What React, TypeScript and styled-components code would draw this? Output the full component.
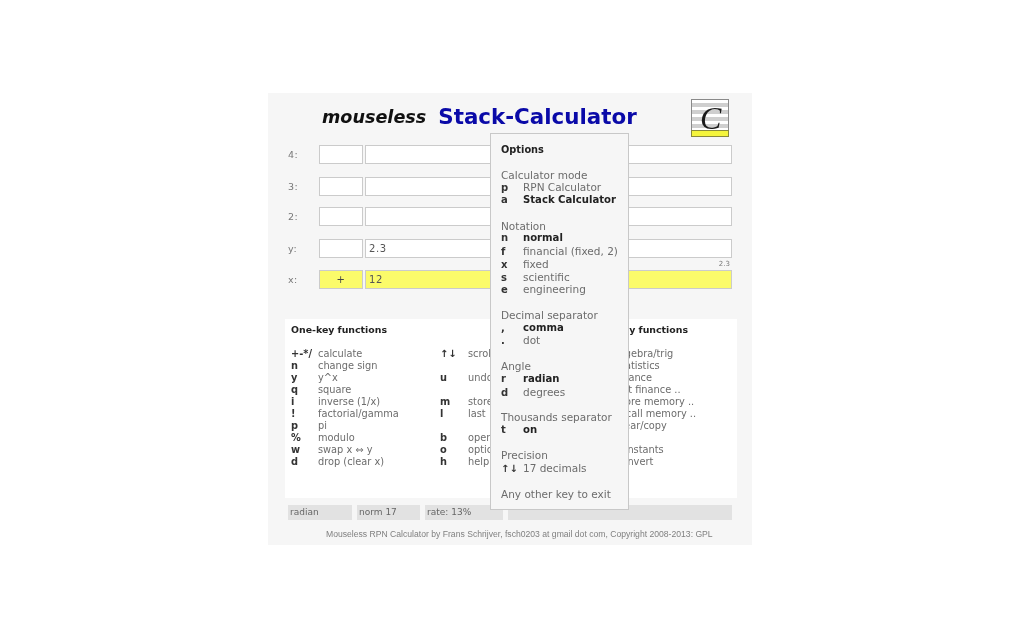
import React from "react";
import styled, { createGlobalStyle } from "styled-components";

const GlobalStyle = createGlobalStyle`
  html, body {
    margin: 0;
    padding: 0;
    background: #fff;
    font-family: "DejaVu Sans", Verdana, sans-serif;
  }
`;

const Page = styled.div`
  width: 1020px;
  height: 638px;
  padding-top: 93px;
  box-sizing: border-box;
  overflow: hidden;
`;

const Panel = styled.div`
  position: relative;
  width: 484px;
  height: 452px;
  margin-left: 268px;
  background: #f6f6f6;
  box-sizing: border-box;
  filter: blur(0.45px);
`;

const Header = styled.div`
  height: 46px;
  display: flex;
  align-items: flex-start;
  padding: 6px 23px 0 54px;
`;

const Mouseless = styled.span`
  font-size: 17.6px;
  font-weight: bold;
  font-style: italic;
  color: #111;
  margin-top: 8px;
`;

const Title = styled.span`
  font-size: 21.4px;
  font-weight: bold;
  color: #0a0aa8;
  margin-left: 12px;
  margin-top: 5px;
`;

const Logo = styled.svg`
  margin-left: auto;
  width: 38px;
  height: 38px;
  flex-shrink: 0;
`;

const Stack = styled.div`
  padding: 0 20px 0 20px;
`;

const Row = styled.div<{ $top: number }>`
  display: flex;
  align-items: center;
  height: 19px;
  margin-top: ${(p) => p.$top}px;
`;

const RegLabel = styled.div`
  width: 31px;
  font-size: 9.5px;
  letter-spacing: 0.5px;
  color: #777;
  padding-bottom: 1px;
`;

const Field = styled.div<{ $hot?: boolean }>`
  height: 19px;
  box-sizing: border-box;
  background: ${(p) => (p.$hot ? "#fbfb6a" : "#fff")};
  border: 1px solid #cbcbcb;
  font-size: 10px;
  line-height: 17px;
  color: #555;
  padding: 0 3px;
  letter-spacing: 0.6px;
`;

const OpField = styled(Field)`
  width: 44px;
  text-align: center;
  color: #444;
`;

const ValueField = styled(Field)`
  width: 367px;
  margin-left: 2px;
`;

const Shadow = styled.div`
  height: 0;
  text-align: right;
  font-size: 7px;
  line-height: 12px;
  color: #777;
  padding-right: 2px;
`;

const Functions = styled.div`
  width: 452px;
  height: 179px;
  margin: 30px 0 0 17px;
  background: #fff;
  box-sizing: border-box;
  padding: 4px 6px 0;
`;

const FnTitle = styled.div`
  font-size: 9.4px;
  font-weight: bold;
  color: #222;
  line-height: 13px;
`;

const FnColumns = styled.div`
  display: grid;
  grid-template-columns: 149px 152px 1fr;
`;

const FnColumn = styled.div``;

const FnRow = styled.div`
  display: flex;
  align-items: baseline;
  height: 12px;
  line-height: 12px;
  font-size: 9.8px;
  color: #6c6c6c;
  white-space: nowrap;
`;

const FnKey = styled.span<{ $width: number }>`
  width: ${(p) => p.$width}px;
  font-weight: bold;
  color: #333;
`;

const FnHeading = styled.div`
  position: relative;
  height: 14px;
  margin-bottom: 11px;
`;

const FnTitleRight = styled(FnTitle)`
  position: absolute;
  right: 43px;
  white-space: nowrap;
`;

const Status = styled.div`
  display: flex;
  gap: 5px;
  margin: 7px 0 0 20px;
`;

const StatusCell = styled.div<{ $width: number }>`
  width: ${(p) => p.$width}px;
  height: 15px;
  background: #e2e2e2;
  font-size: 9px;
  line-height: 15px;
  color: #666;
  padding-left: 2px;
  box-sizing: border-box;
`;

const Footer = styled.div`
  margin: 8px 0 0 58px;
  font-family: "Liberation Sans", Arial, sans-serif;
  font-size: 8.62px;
  line-height: 12px;
  color: #808080;
  white-space: nowrap;
`;

const Options = styled.div`
  position: absolute;
  left: 222px;
  top: 40px;
  width: 139px;
  height: 377px;
  box-sizing: border-box;
  background: #f6f6f6;
  border: 1px solid #c8c8c8;
  padding: 9px 0 0 10px;
  font-size: 10.5px;
  line-height: 12.78px;
  color: #6c6c6c;
`;

const OptLine = styled.div<{ $strong?: boolean }>`
  height: 12.78px;
  white-space: nowrap;
  font-weight: ${(p) => (p.$strong ? "bold" : "normal")};
  font-size: ${(p) => (p.$strong ? "9.8px" : "10.5px")};
  color: ${(p) => (p.$strong ? "#222" : "#6c6c6c")};
  ${(p) => (p.$strong ? "padding-top: 1px; margin-bottom: -1px;" : "")}
`;

const OptRow = styled.div<{ $active?: boolean }>`
  display: flex;
  align-items: baseline;
  height: 12.78px;
  white-space: nowrap;
  font-weight: ${(p) => (p.$active ? "bold" : "normal")};
  font-size: ${(p) => (p.$active ? "10.1px" : "10.5px")};
  color: ${(p) => (p.$active ? "#222" : "#6c6c6c")};
`;

const OptKey = styled.span`
  width: 22px;
  font-weight: bold;
  font-size: 10px;
  color: #333;
`;

const Gap = styled.div`
  height: 12.78px;
`;

const regs = [
  { label: "4:", top: 0, value: "" },
  { label: "3:", top: 13, value: "" },
  { label: "2:", top: 11, value: "" },
  { label: "y:", top: 13, value: "2.3" },
];

const colOne = [
  ["+-*/", "calculate"],
  ["n", "change sign"],
  ["y", "y^x"],
  ["q", "square"],
  ["i", "inverse (1/x)"],
  ["!", "factorial/gamma"],
  ["p", "pi"],
  ["%", "modulo"],
  ["w", "swap x ⇔ y"],
  ["d", "drop (clear x)"],
];

const colTwo = [
  ["↑↓", "scroll"],
  ["", ""],
  ["u", "undo"],
  ["", ""],
  ["m", "store"],
  ["l", "last"],
  ["", ""],
  ["b", "open"],
  ["o", "optic"],
  ["h", "help"],
];

const colThree = [
  ["a", "algebra/trig"],
  ["s", "statistics"],
  ["f", "finance"],
  ["B", "bet finance .."],
  ["M", "store memory .."],
  ["R", "recall memory .."],
  ["c", "clear/copy"],
  ["", ""],
  ["k", "constants"],
  ["v", "convert"],
];

const optionGroups: { title: string; rows: [string, string, boolean?][] }[] = [
  {
    title: "Calculator mode",
    rows: [
      ["p", "RPN Calculator"],
      ["a", "Stack Calculator", true],
    ],
  },
  {
    title: "Notation",
    rows: [
      ["n", "normal", true],
      ["f", "financial (fixed, 2)"],
      ["x", "fixed"],
      ["s", "scientific"],
      ["e", "engineering"],
    ],
  },
  {
    title: "Decimal separator",
    rows: [
      [",", "comma", true],
      [".", "dot"],
    ],
  },
  {
    title: "Angle",
    rows: [
      ["r", "radian", true],
      ["d", "degrees"],
    ],
  },
  { title: "Thousands separator", rows: [["t", "on", true]] },
  { title: "Precision", rows: [["↑↓", "17 decimals"]] },
];

const CalcLogo = () => (
  <Logo viewBox="0 0 38 38">
    <rect x="0.5" y="0.5" width="37" height="37" fill="#fff" stroke="#8a8a8a" />
    <rect x="1" y="4" width="36" height="4" fill="#cfcfcf" />
    <rect x="1" y="11" width="36" height="4" fill="#cfcfcf" />
    <rect x="1" y="18" width="36" height="4" fill="#cfcfcf" />
    <rect x="1" y="25" width="36" height="4" fill="#cfcfcf" />
    <rect x="0.5" y="31.5" width="37" height="6" fill="#f5f53c" stroke="#8a8a3a" />
    <text
      x="9"
      y="30"
      fontFamily="'Liberation Serif', 'Times New Roman', serif"
      fontStyle="italic"
      fontSize="32"
      fill="#1a1a1a"
    >
      C
    </text>
  </Logo>
);

const FnList = ({ rows, keyWidth }: { rows: string[][]; keyWidth: number }) => (
  <FnColumn>
    {rows.map((r, i) => (
      <FnRow key={i}>
        <FnKey $width={keyWidth}>{r[0]}</FnKey>
        {r[1]}
      </FnRow>
    ))}
  </FnColumn>
);

export default function App() {
  return (
    <Page>
      <GlobalStyle />
      <Panel>
        <Header>
          <Mouseless>mouseless</Mouseless>
          <Title>Stack-Calculator</Title>
          <CalcLogo />
        </Header>
        <Stack>
          {regs.map((r) => (
            <Row key={r.label} $top={r.top}>
              <RegLabel>{r.label}</RegLabel>
              <OpField />
              <ValueField>{r.value}</ValueField>
            </Row>
          ))}
          <Shadow>2.3</Shadow>
          <Row $top={12}>
            <RegLabel>x:</RegLabel>
            <OpField $hot>+</OpField>
            <ValueField $hot>12</ValueField>
          </Row>
        </Stack>
        <Functions>
          <FnHeading>
            <FnTitleRight>Two-key functions</FnTitleRight>
            <FnTitle>One-key functions</FnTitle>
          </FnHeading>
          <FnColumns>
            <FnList rows={colOne} keyWidth={27} />
            <FnList rows={colTwo} keyWidth={28} />
            <FnList rows={colThree} keyWidth={24} />
          </FnColumns>
        </Functions>
        <Status>
          <StatusCell $width={64}>radian</StatusCell>
          <StatusCell $width={63}>norm 17</StatusCell>
          <StatusCell $width={78}>rate: 13%</StatusCell>
          <StatusCell $width={224} />
        </Status>
        <Footer>
          Mouseless RPN Calculator by Frans Schrijver, fsch0203 at gmail dot com, Copyright 2008-2013: GPL
        </Footer>
        <Options>
          <OptLine $strong>Options</OptLine>
          <Gap />
          {optionGroups.map((g) => (
            <React.Fragment key={g.title}>
              <OptLine>{g.title}</OptLine>
              {g.rows.map((o) => (
                <OptRow key={o[0]} $active={o[2]}>
                  <OptKey>{o[0]}</OptKey>
                  {o[1]}
                </OptRow>
              ))}
              <Gap />
            </React.Fragment>
          ))}
          <OptLine>Any other key to exit</OptLine>
        </Options>
      </Panel>
    </Page>
  );
}
